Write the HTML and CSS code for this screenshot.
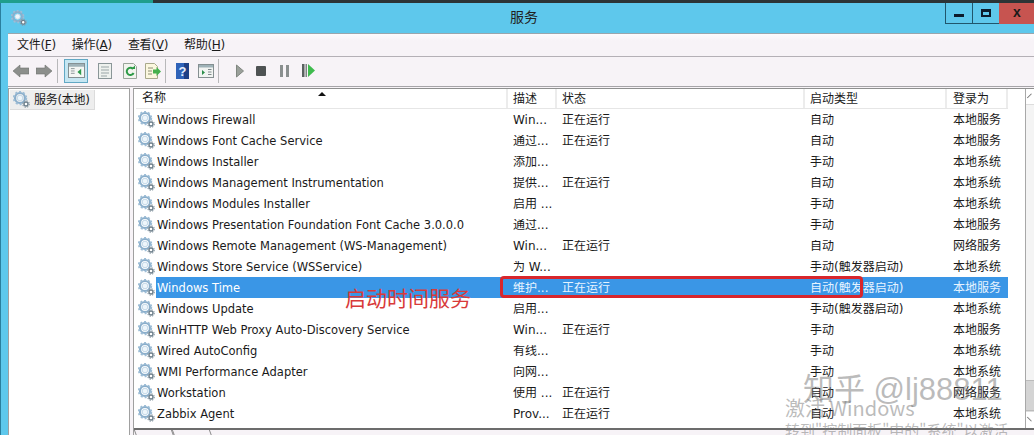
FILE: index.html
```html
<!DOCTYPE html>
<html lang="zh-CN">
<head>
<meta charset="utf-8">
<title>服务</title>
<link rel="stylesheet" href="styles.css">
</head>
<body>
<svg class="defs" width="0" height="0" aria-hidden="true">
  <defs>
    <symbol id="gear" viewBox="0 0 17 17">
      <g fill="none">
        <circle cx="7" cy="7" r="5" stroke="#8aaecb" stroke-width="2.200"/>
        <circle cx="7" cy="7" r="6.300" stroke="#9dbdd6" stroke-width="1.800" stroke-dasharray="2 2"/>
        <circle cx="7" cy="7" r="2.800" fill="#eef6fb" stroke="#c3d8e8" stroke-width="1"/>
        <circle cx="13" cy="13" r="2" fill="#fff" stroke="#6f808c" stroke-width="1.400"/>
        <circle cx="13" cy="13" r="3.300" stroke="#8b9ba6" stroke-width="1.100" stroke-dasharray="1.300 1.300"/>
      </g>
    </symbol>
  </defs>
</svg>
<div class="topstrip"><div class="topstrip-accent"></div></div>
<div class="window">
  <header class="titlebar">
    <svg class="title-icon"><use href="#gear"/></svg>
    <div class="title-text">服务</div>
    <div class="winbtns">
      <div class="winbtn"><span class="glyph-min"></span></div>
      <div class="winbtn"><span class="glyph-max"></span></div>
      <div class="winbtn winbtn-close">x</div>
    </div>
  </header>
  <div class="client">
    <nav class="menubar">
      <span class="menu">文件(<u>F</u>)</span>
      <span class="menu">操作(<u>A</u>)</span>
      <span class="menu">查看(<u>V</u>)</span>
      <span class="menu">帮助(<u>H</u>)</span>
    </nav>
    <div class="toolbar">
      <div class="tgroup tgroup-nav">
        <svg class="ti" viewBox="0 0 16 14"><path d="M0 7 7 1v3h9v6H7v3z" fill="#8c8f8c" stroke="#6f726f" stroke-width=".6"/></svg>
        <svg class="ti nav-next" viewBox="0 0 16 14"><path d="M16 7 9 1v3H0v6h9v3z" fill="#8c8f8c" stroke="#6f726f" stroke-width=".6"/></svg>
      </div>
      <div class="tgroup tgroup-main">
        <div class="tactive">
          <svg class="ti" viewBox="0 0 18 16"><rect x=".5" y=".5" width="17" height="15" fill="#f4f6f4" stroke="#7f8a8c"/><rect x="1" y="1" width="16" height="3" fill="#9fb2b8"/><path d="M3 6h4M3 8.500h4M3 11h4" stroke="#8a9396"/><path d="M14 6v7l-4-3.500z" fill="#2c9a4b"/></svg>
        </div>
        <svg class="ti i-doc" viewBox="0 0 14 16"><rect x=".5" y=".5" width="13" height="15" fill="#eef1ee" stroke="#8a9698"/><path d="M3 4h8M3 7h8M3 10h8M3 13h6" stroke="#9aa5a7"/></svg>
        <svg class="ti i-ref" viewBox="0 0 14 16"><path d="M.5.500h10l3 3v12H.5z" fill="#f2f4ee" stroke="#9aa59a"/><path d="M10 6a3.600 3.600 0 1 0 .6 4" fill="none" stroke="#2d9a47" stroke-width="2"/><path d="M8 6h4V2.500z" fill="#2d9a47"/></svg>
        <svg class="ti i-exp" viewBox="0 0 16 16"><path d="M.5.500h9l3 3v12h-12z" fill="#fbf7df" stroke="#a9a98c"/><path d="M3 5h5M3 8h4M3 11h4" stroke="#8c8c74"/><path d="M8 6.500h3.500V4l4.500 4.500-4.500 4.500v-2.500H8z" fill="#46b04d"/></svg>
      </div>
      <div class="tgroup tgroup-help">
        <svg class="ti i-help" viewBox="0 0 13 16"><rect width="13" height="16" fill="#2f62b8"/><rect x="8" width="5" height="16" fill="#1d3f85"/><text x="6.500" y="13" class="help-q">?</text></svg>
        <svg class="ti i-panel" viewBox="0 0 16 14"><rect x=".5" y=".5" width="15" height="13" fill="#f2f4f2" stroke="#858f91"/><rect x="1" y="1" width="14" height="2.500" fill="#9fb2b8"/><path d="M4 6v5l3-2.500z" fill="#2c8f4b"/><path d="M10 5.500h3.500M10 8h3.500M10 10.500h3.500" stroke="#7f898b"/></svg>
      </div>
      <div class="tgroup tgroup-run">
        <svg class="ti i-play" viewBox="0 0 8 14"><path d="M.5 1 7.500 7 .5 13z" fill="#9aa09a" stroke="#808680"/></svg>
        <svg class="ti i-stop" viewBox="0 0 10 10"><rect width="10" height="10" rx="1" fill="#4e5253"/></svg>
        <svg class="ti i-pause" viewBox="0 0 9 12"><rect width="3" height="12" fill="#8a8f8f"/><rect x="6" width="3" height="12" fill="#8a8f8f"/></svg>
        <svg class="ti i-resume" viewBox="0 0 13 13"><rect width="2.500" height="13" fill="#5a6260"/><rect x="3.500" width="1.500" height="13" fill="#7d8583"/><path d="M6 0l7 6.500L6 13z" fill="#3fbb4e"/></svg>
      </div>
    </div>
    <main class="panes">
      <aside class="tree">
        <div class="tree-node"><svg class="gear"><use href="#gear"/></svg><span>服务(本地)</span></div>
      </aside>
      <section class="list">
        <div class="grid-wrap">
          <div class="table">
            <div class="row head">
              <div class="c c-icon"></div>
              <div class="c c-name">名称<span class="sort"></span></div>
              <div class="c c-desc">描述</div>
              <div class="c c-stat">状态</div>
              <div class="c c-type">启动类型</div>
              <div class="c c-user">登录为</div>
            </div>
            <div class="row"><div class="c c-icon"><svg class="gear"><use href="#gear"/></svg></div><div class="c c-name">Windows Firewall</div><div class="c c-desc">Win...</div><div class="c c-stat">正在运行</div><div class="c c-type">自动</div><div class="c c-user">本地服务</div></div>
            <div class="row"><div class="c c-icon"><svg class="gear"><use href="#gear"/></svg></div><div class="c c-name">Windows Font Cache Service</div><div class="c c-desc">通过...</div><div class="c c-stat">正在运行</div><div class="c c-type">自动</div><div class="c c-user">本地服务</div></div>
            <div class="row"><div class="c c-icon"><svg class="gear"><use href="#gear"/></svg></div><div class="c c-name">Windows Installer</div><div class="c c-desc">添加...</div><div class="c c-stat"></div><div class="c c-type">手动</div><div class="c c-user">本地系统</div></div>
            <div class="row"><div class="c c-icon"><svg class="gear"><use href="#gear"/></svg></div><div class="c c-name">Windows Management Instrumentation</div><div class="c c-desc">提供...</div><div class="c c-stat">正在运行</div><div class="c c-type">自动</div><div class="c c-user">本地系统</div></div>
            <div class="row"><div class="c c-icon"><svg class="gear"><use href="#gear"/></svg></div><div class="c c-name">Windows Modules Installer</div><div class="c c-desc">启用 ...</div><div class="c c-stat"></div><div class="c c-type">手动</div><div class="c c-user">本地系统</div></div>
            <div class="row"><div class="c c-icon"><svg class="gear"><use href="#gear"/></svg></div><div class="c c-name">Windows Presentation Foundation Font Cache 3.0.0.0</div><div class="c c-desc">通过...</div><div class="c c-stat"></div><div class="c c-type">手动</div><div class="c c-user">本地服务</div></div>
            <div class="row"><div class="c c-icon"><svg class="gear"><use href="#gear"/></svg></div><div class="c c-name">Windows Remote Management (WS-Management)</div><div class="c c-desc">Win...</div><div class="c c-stat">正在运行</div><div class="c c-type">自动</div><div class="c c-user">网络服务</div></div>
            <div class="row"><div class="c c-icon"><svg class="gear"><use href="#gear"/></svg></div><div class="c c-name">Windows Store Service (WSService)</div><div class="c c-desc">为 W...</div><div class="c c-stat"></div><div class="c c-type">手动(触发器启动)</div><div class="c c-user">本地系统</div></div>
            <div class="row selected"><div class="c c-icon"><svg class="gear"><use href="#gear"/></svg></div><div class="c c-name">Windows Time</div><div class="c c-desc">维护...</div><div class="c c-stat">正在运行</div><div class="c c-type">自动(触发器启动)</div><div class="c c-user">本地服务</div></div>
            <div class="row"><div class="c c-icon"><svg class="gear"><use href="#gear"/></svg></div><div class="c c-name">Windows Update</div><div class="c c-desc">启用...</div><div class="c c-stat"></div><div class="c c-type">手动(触发器启动)</div><div class="c c-user">本地系统</div></div>
            <div class="row"><div class="c c-icon"><svg class="gear"><use href="#gear"/></svg></div><div class="c c-name">WinHTTP Web Proxy Auto-Discovery Service</div><div class="c c-desc">Win...</div><div class="c c-stat">正在运行</div><div class="c c-type">手动</div><div class="c c-user">本地服务</div></div>
            <div class="row"><div class="c c-icon"><svg class="gear"><use href="#gear"/></svg></div><div class="c c-name">Wired AutoConfig</div><div class="c c-desc">有线...</div><div class="c c-stat"></div><div class="c c-type">手动</div><div class="c c-user">本地系统</div></div>
            <div class="row"><div class="c c-icon"><svg class="gear"><use href="#gear"/></svg></div><div class="c c-name">WMI Performance Adapter</div><div class="c c-desc">向网...</div><div class="c c-stat"></div><div class="c c-type">手动</div><div class="c c-user">本地系统</div></div>
            <div class="row"><div class="c c-icon"><svg class="gear"><use href="#gear"/></svg></div><div class="c c-name">Workstation</div><div class="c c-desc">使用 ...</div><div class="c c-stat">正在运行</div><div class="c c-type">自动</div><div class="c c-user">网络服务</div></div>
            <div class="row"><div class="c c-icon"><svg class="gear"><use href="#gear"/></svg></div><div class="c c-name">Zabbix Agent</div><div class="c c-desc">Prov...</div><div class="c c-stat">正在运行</div><div class="c c-type">自动</div><div class="c c-user">本地系统</div></div>
          </div>
          <div class="scrollbar">
            <div class="sb-btn sb-up"></div>
            <div class="sb-track"><div class="sb-thumb"></div></div>
            <div class="sb-btn sb-down"></div>
          </div>
        </div>
        <div class="tabs"><span class="tab"></span><span class="tab"></span></div>
      </section>
    </main>
  </div>
</div>
<div class="annot-box"></div>
<div class="annot-label">启动时间服务</div>
<div class="mark mark-zhihu">知乎 @lj88811</div>
<div class="mark mark-win">激活 Windows</div>
<div class="mark mark-sub">转到"控制面板"中的"系统"以激活</div>
</body>
</html>
```

FILE: styles.css
```css
* { box-sizing: border-box; }
html, body { margin: 0; padding: 0; }
body {
  width: 1034px;
  height: 435px;
  overflow: hidden;
  position: relative;
  background: #5ec8ec;
  font: 12px/1 "DejaVu Sans", "Noto Sans CJK SC", sans-serif;
  color: #1a1a1a;
}
.defs { position: absolute; }
.topstrip { height: 3px; background: #2c3436; }
.topstrip-accent { width: 153px; height: 3px; background: #1f9e8c; }
.window { height: 432px; display: flex; flex-direction: column; border-left: 1px solid #2a7f9e; }

.titlebar { height: 30px; display: flex; align-items: flex-start; position: relative; background: #5ec8ec; flex: none; }
.title-icon { width: 16px; height: 16px; margin: 7px 0 0 10px; }
.title-text { position: absolute; left: 509px; top: 7px; font-size: 14px; line-height: 15px; color: #222; }
.winbtns { margin-left: auto; display: flex; height: 21px; }
.winbtn { width: 27px; display: flex; align-items: center; justify-content: center; border: 1px solid #20566c; border-top: 0; border-right: 0; }
.winbtn-close { width: 35px; background: #c75450; border-color: #c75450; font: bold 14px/1 "Liberation Sans", sans-serif; color: #1a1a1a; padding-bottom: 3px; }
.glyph-min { width: 10px; height: 3px; background: #0c1c2c; margin-top: 5px; }
.glyph-max { width: 10px; height: 8px; border: 2px solid #0c1c2c; border-top-width: 3px; }

.client { flex: 1; margin-left: 7px; min-height: 0; display: flex; flex-direction: column; background: #f7f3f7; border-top: 1px solid #9aa6ad; }
.menubar { height: 23px; display: flex; align-items: center; gap: 16px; padding-left: 9px; border-bottom: 1px solid #b4b0b6; flex: none; background: linear-gradient(#fdfbfd, #f7f3f7 30%); }
.menu { font-size: 12px; letter-spacing: -.3px; }
.menu u { text-underline-offset: 1px; }

.toolbar { height: 30px; display: flex; align-items: center; padding: 0 0 2px 5px; border-bottom: 1px solid #a6a4a8; flex: none; }
.tgroup { display: flex; align-items: center; height: 24px; border-right: 1px solid #b8b8ba; }
.ti { display: block; flex: none; }
.tgroup-nav { width: 45px; }
.tgroup-nav .ti { width: 16px; height: 14px; }
.nav-next { margin-left: 7px; }
.tgroup-main { width: 108px; padding-left: 6px; }
.tactive { width: 24px; height: 24px; background: #c6e6f2; border: 1px solid #62a8c4; display: flex; align-items: center; justify-content: center; }
.tactive .ti { width: 17px; height: 15px; }
.i-doc { width: 14px; height: 16px; margin-left: 10px; }
.i-ref { width: 14px; height: 16px; margin-left: 11px; }
.i-exp { width: 16px; height: 16px; margin-left: 8px; }
.tgroup-help { width: 53px; padding-left: 10px; }
.i-help { width: 13px; height: 16px; }
.help-q { font: bold 13px "Liberation Sans", sans-serif; fill: #e6eefc; text-anchor: middle; }
.i-panel { width: 16px; height: 14px; margin-left: 9px; }
.tgroup-run { border-right: 0; padding-left: 17px; }
.i-play { width: 8px; height: 14px; }
.i-stop { width: 10px; height: 10px; margin-left: 12px; }
.i-pause { width: 9px; height: 12px; margin-left: 14px; }
.i-resume { width: 13px; height: 13px; margin-left: 13px; }

.panes { flex: 1; min-height: 0; display: flex; gap: 3px; padding-top: 1px; }
.tree { width: 122px; background: #fff; border: 1px solid #a0a0a0; border-bottom: 0; padding: 1px 0 0 1px; flex: none; }
.tree-node { height: 20px; width: 85px; background: #eeeeee; border-bottom: 1px solid #dcdcdc; border-right: 1px solid #dcdcdc; display: flex; align-items: center; padding-left: 3px; gap: 4px; white-space: nowrap; letter-spacing: -.3px; }
.gear { width: 17px; height: 17px; display: block; flex: none; }

.list { flex: 1; min-width: 0; display: flex; flex-direction: column; border-left: 1px solid #a0a0a0; border-top: 1px solid #8f8f8f; background: #fff; }
.grid-wrap { display: flex; height: 341px; flex: none; border-bottom: 2px solid #6c6c6c; }
.table { width: 891px; padding-left: 2px; flex: none; }
.row { display: grid; grid-template-columns: 21px 351px 49px 248px 142px 61px; width: 872px; height: 21px; align-items: center; white-space: nowrap; }
.row.head { height: 20px; border-bottom: 1px solid #e6e6e6; }
.head .c { height: 19px; display: flex; align-items: center; position: relative; border-right: 2px solid #ececec; }
.head .c-icon { border-right: 0; }
.head .c.c-name { margin-left: -16px; width: 367px; padding-left: 1px; font-size: 12px; letter-spacing: 0; line-height: 19px; }
.c { overflow: hidden; }
.c-icon { display: flex; justify-content: center; }
.c-desc { padding-left: 5px; }
.c-stat { padding-left: 5px; }
.c-type { padding-left: 5px; }
.c-user { padding-left: 6px; overflow: visible; }
.row .c-name { height: 100%; line-height: 22px; font-size: 11.5px; }
.sort { position: absolute; left: 177px; top: 3px; width: 0; height: 0; border: 4px solid transparent; border-top: 0; border-bottom: 4px solid #111; }
.row.selected { background: linear-gradient(90deg, #fff 0 20px, #3a96e6 20px, #3a96e6 100%); color: #fff; }
.row.selected .c-desc, .row.selected .c-stat, .row.selected .c-type, .row.selected .c-user { color: #e6f3ff; }

.scrollbar { margin-left: auto; width: 9px; border-left: 1px solid #a8a8a8; display: flex; flex-direction: column; background: #f4f4f4; }
.sb-btn { height: 16px; flex: none; position: relative; background: #fff; border-bottom: 1px solid #ddd; }
.sb-down { border-top: 1px solid #ddd; border-bottom: 0; height: 17px; }
.sb-up::after, .sb-down::after { content: ""; position: absolute; left: 2px; top: 6px; width: 6px; height: 6px; border-left: 1px solid #777; transform: rotate(45deg); }
.sb-down::after { transform: rotate(-45deg); top: 2px; }
.sb-track { flex: 1; padding-top: 275px; }
.sb-thumb { height: 31px; background: #d4d4d4; border-top: 1px solid #bbb; border-bottom: 1px solid #bbb; }
.tabs { display: flex; padding-left: 1px; height: 6px; background: #f7f3f7; }
.tab { width: 38px; height: 6px; border: 1px solid #8a8a8a; border-top: 0; transform: skewX(20deg); }

.annot-box { position: absolute; left: 500px; top: 276px; width: 363px; height: 22px; border: 3px solid #d8262c; border-radius: 4px; }
.annot-label { position: absolute; left: 345px; top: 287px; font-size: 21px; line-height: 21px; color: #d83a3a; font-family: "Noto Sans CJK SC", sans-serif; }
.mark { position: absolute; white-space: nowrap; color: rgba(120,120,120,.5); font-family: "Noto Sans CJK SC", "Liberation Sans", sans-serif; pointer-events: none; }
.mark-zhihu { left: 803px; top: 372px; font-size: 31px; line-height: 36px; font-family: "Liberation Sans", "Noto Sans CJK SC", sans-serif; }
.mark-win { left: 785px; top: 396px; font-size: 20px; line-height: 24px; }
.mark-sub { left: 785px; top: 421px; font-size: 15px; line-height: 18px; }
```
